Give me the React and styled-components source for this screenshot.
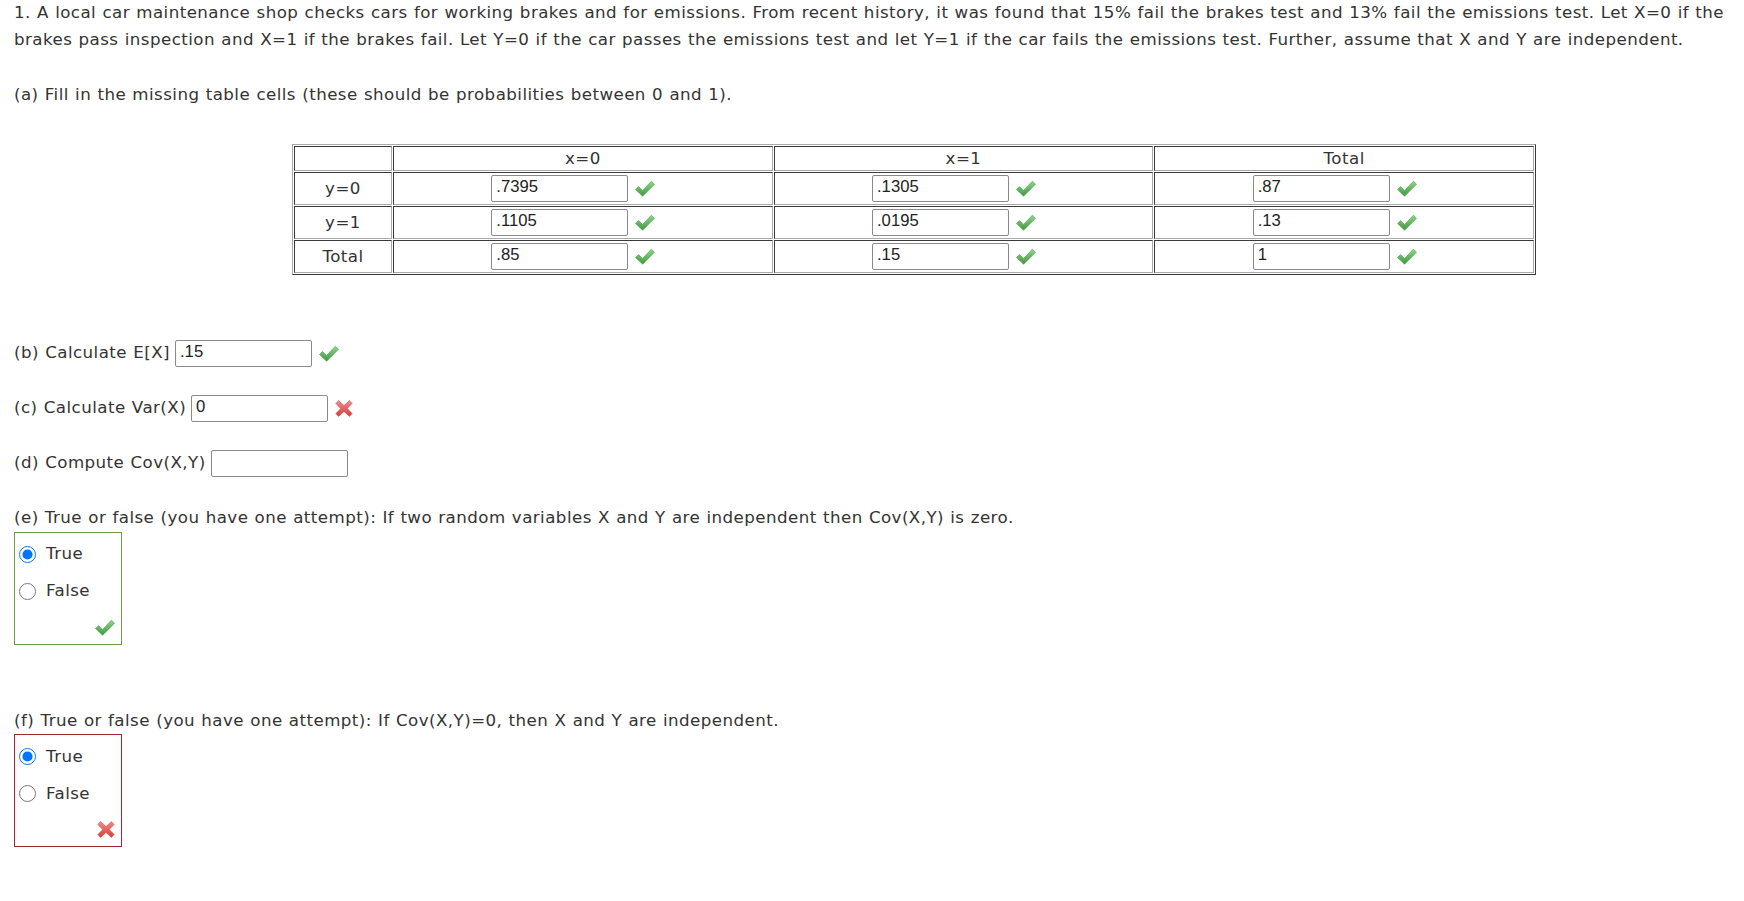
import React from 'react'
import styled, { createGlobalStyle } from 'styled-components';

const GlobalStyle = createGlobalStyle`
body {
  margin: 0;
  background: #fff;
  font-family: "DejaVu Sans", Verdana, sans-serif;
  font-size: 16.67px;
  color: #333;
}
`;

function CheckIcon() {
    return (
        <IconSvg width="20" height="17" viewBox="0 0 20 17">
            <defs>
                <linearGradient id="okGrad" x1="0" y1="0" x2="0" y2="1">
                    <stop offset="0" stopColor="#8fd68a" />
                    <stop offset="1" stopColor="#3f9a3f" />
                </linearGradient>
            </defs>
            <polygon points="0.5,9.5 3.6,6.6 7.6,10.4 16.4,1.2 19.5,4.2 7.6,16.2" fill="url(#okGrad)" stroke="#4a9a47" strokeWidth="0.6" strokeLinejoin="round" />
        </IconSvg>
    )
}

function CrossIcon() {
    return (
        <IconSvg width="18" height="17" viewBox="0 0 18 17">
            <defs>
                <linearGradient id="badGrad" x1="0" y1="0" x2="0" y2="1">
                    <stop offset="0" stopColor="#f48a8a" />
                    <stop offset="1" stopColor="#d93c3c" />
                </linearGradient>
            </defs>
            <polygon points="0.8,3.4 3.6,0.6 9,5.6 14.4,0.6 17.2,3.4 12.3,8.5 17.2,13.6 14.4,16.4 9,11.4 3.6,16.4 0.8,13.6 5.7,8.5" fill="url(#badGrad)" stroke="#d34a4a" strokeWidth="0.5" strokeLinejoin="round" />
        </IconSvg>
    )
}

function Answer({ value, status }) {
    return (
        <AnswerWrap>
            <AnswerInput type="text" defaultValue={value} />
            {status === 'ok' && <CheckIcon />}
            {status === 'bad' && <CrossIcon />}
        </AnswerWrap>
    )
}

const rows = [
    { label: 'y=0', cells: ['.7395', '.1305', '.87'] },
    { label: 'y=1', cells: ['.1105', '.0195', '.13'] },
    { label: 'Total', cells: ['.85', '.15', '1'] },
];

function ChoiceBox({ name, correct }) {
    return (
        <ChoiceContainer correct={correct}>
            <ChoiceRow>
                <Radio type="radio" name={name} defaultChecked />
                <span>True</span>
            </ChoiceRow>
            <ChoiceRow>
                <Radio type="radio" name={name} />
                <span>False</span>
            </ChoiceRow>
            <ChoiceMark>
                {correct ? <CheckIcon /> : <CrossIcon />}
            </ChoiceMark>
        </ChoiceContainer>
    )
}

function App() {
    return (
        <Page>
            <GlobalStyle />
            <Intro>
                1. A local car maintenance shop checks cars for working brakes and for emissions. From recent history, it was found that 15% fail the brakes test and 13% fail the emissions test. Let X=0 if the brakes pass inspection and X=1 if the brakes fail. Let Y=0 if the car passes the emissions test and let Y=1 if the car fails the emissions test. Further, assume that X and Y are independent.
            </Intro>
            <PartText>(a) Fill in the missing table cells (these should be probabilities between 0 and 1).</PartText>
            <ProbTable>
                <tbody>
                    <tr>
                        <HeadCell first />
                        <HeadCell>x=0</HeadCell>
                        <HeadCell>x=1</HeadCell>
                        <HeadCell>Total</HeadCell>
                    </tr>
                    {rows.map((r) => (
                        <tr key={r.label}>
                            <LabelCell>{r.label}</LabelCell>
                            {r.cells.map((c, i) => (
                                <ValueCell key={i}>
                                    <CellContent>
                                        <Answer value={c} status="ok" />
                                    </CellContent>
                                </ValueCell>
                            ))}
                        </tr>
                    ))}
                </tbody>
            </ProbTable>
            <QuestionRow first>
                <span>(b) Calculate E[X]</span>
                <Answer value=".15" status="ok" />
            </QuestionRow>
            <QuestionRow>
                <span>(c) Calculate Var(X)</span>
                <Answer value="0" status="bad" />
            </QuestionRow>
            <QuestionRow>
                <span>(d) Compute Cov(X,Y)</span>
                <Answer value="" />
            </QuestionRow>
            <ChoiceTitle>(e) True or false (you have one attempt): If two random variables X and Y are independent then Cov(X,Y) is zero.</ChoiceTitle>
            <ChoiceBox name="e" correct />
            <ChoiceTitle far>(f) True or false (you have one attempt): If Cov(X,Y)=0, then X and Y are independent.</ChoiceTitle>
            <ChoiceBox name="f" correct={false} />
        </Page>
    )
}

export default App

const Page = styled.div`
padding:0 3px 60px 14px;
line-height:26.67px;
letter-spacing:0.45px;
word-spacing:0.5px;
`;

const Intro = styled.p`
margin:0;
`;

const PartText = styled.p`
margin:29px 0 0;
`;

const ProbTable = styled.table`
margin:35px 0 0 278px;
width:1244px;
border-collapse:separate;
border-spacing:1px;
border:1px solid;
border-color:#a9a9a9 #3a3a3a #3a3a3a #a9a9a9;
line-height:normal;
`;

const HeadCell = styled.td`
border:1px solid;
border-color:#3a3a3a #a9a9a9 #a9a9a9 #3a3a3a;
height:23px;
padding:0;
text-align:center;
width:${(p) => (p.first ? '96px' : 'auto')};
`;

const LabelCell = styled.td`
border:1px solid;
border-color:#3a3a3a #a9a9a9 #a9a9a9 #3a3a3a;
height:31px;
padding:0;
text-align:center;
`;

const ValueCell = styled(LabelCell)``;

const CellContent = styled.div`
display:flex;
justify-content:center;
padding-right:19px;
`;

const AnswerWrap = styled.span`
display:inline-flex;
align-items:center;
gap:7px;
`;

const AnswerInput = styled.input`
box-sizing:border-box;
width:137px;
height:27px;
margin:0;
padding:0 4px 3px;
border:1px solid #8a8a8a;
border-radius:2px;
font-family:"Liberation Sans", Arial, sans-serif;
font-size:16.67px;
letter-spacing:normal;
color:#222;
outline:none;
`;

const IconSvg = styled.svg`
display:block;
flex:none;
`;

const QuestionRow = styled.div`
display:flex;
align-items:center;
gap:5px;
height:27px;
margin-top:${(p) => (p.first ? '65px' : '28px')};
`;

const ChoiceTitle = styled.p`
margin:${(p) => (p.far ? '63px' : '28px')} 0 0;
`;

const ChoiceContainer = styled.div`
box-sizing:border-box;
width:108px;
height:113px;
display:flex;
flex-direction:column;
padding:3px 6px 0 0;
border:1px solid ${(p) => (p.correct ? '#6b9e4b' : '#a8262b')};
`;

const ChoiceRow = styled.label`
display:flex;
align-items:center;
height:37px;
`;

const Radio = styled.input`
width:17px;
height:17px;
margin:0 10px 0 4px;
accent-color:#0075ff;
`;

const ChoiceMark = styled.div`
display:flex;
justify-content:flex-end;
margin-top:9px;
`;
